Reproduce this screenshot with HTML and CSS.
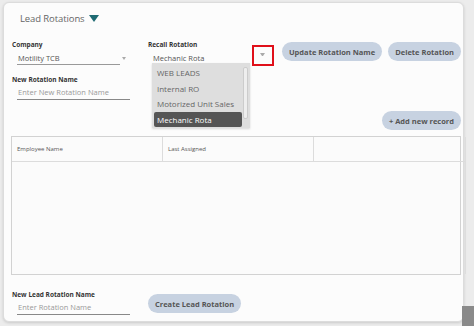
FILE: index.html
```html
<!DOCTYPE html>
<html lang="en">
<head>
    <meta charset="UTF-8">
    <title>Lead Rotations</title>
    <link rel="stylesheet" href="styles.css">
</head>
<body>
    <div class="card">
        <div class="card-header">
            <span class="card-title">Lead Rotations</span>
            <span class="caret"></span>
        </div>

        <div class="top-row">
            <div class="field-col">
                <div class="field">
                    <label>Company</label>
                    <div class="select-line">
                        <span>Motility TCB</span>
                        <span class="mini-arrow"></span>
                    </div>
                </div>
                <div class="field">
                    <label>New Rotation Name</label>
                    <div class="input-line wide">Enter New Rotation Name</div>
                </div>
            </div>

            <div class="recall-col">
                <label>Recall Rotation</label>
                <div class="recall-select">
                    <span>Mechanic Rota</span>
                    <span class="arrow-box"><span class="mini-arrow"></span></span>
                </div>
                <div class="dropdown">
                    <div class="dropdown-list">
                        <div class="dd-item">WEB LEADS</div>
                        <div class="dd-item">Internal RO</div>
                        <div class="dd-item">Motorized Unit Sales</div>
                        <div class="dd-item selected">Mechanic Rota</div>
                    </div>
                    <div class="dd-scroll"></div>
                </div>
            </div>

            <div class="btn-row">
                <button class="pill-btn">Update Rotation Name</button>
                <button class="pill-btn">Delete Rotation</button>
            </div>
        </div>

        <div class="add-row">
            <button class="pill-btn">+ Add new record</button>
        </div>

        <div class="grid-box">
            <div class="grid-main">
                <div class="grid-head">
                    <div class="grid-col">Employee Name</div>
                    <div class="grid-col">Last Assigned</div>
                    <div class="grid-col"></div>
                </div>
                <div class="grid-body"></div>
            </div>
            <div class="grid-scroll"><div class="grid-thumb"></div></div>
        </div>

        <div class="bottom-row">
            <div class="field">
                <label>New Lead Rotation Name</label>
                <div class="input-line wide">Enter Rotation Name</div>
            </div>
            <button class="pill-btn">Create Lead Rotation</button>
        </div>
    </div>

    <div class="page-thumb"></div>
</body>
</html>
```

FILE: styles.css
```css
* {
    margin: 0;
    padding: 0;
    box-sizing: border-box;
}

body {
    font-family: 'Open Sans', 'Liberation Sans', sans-serif;
    background: #ececec;
    width: 474px;
    height: 326px;
    overflow: hidden;
    padding: 2px 10px 0 3px;
    position: relative;
    color: #555;
}

.card {
    background: #fcfcfc;
    border: 1px solid #dcdcdc;
    border-radius: 6px;
    box-shadow: 0 1px 3px rgba(0, 0, 0, 0.15);
    height: 320px;
    padding: 0 2px 0 7px;
}

.card-header {
    display: flex;
    align-items: center;
    height: 30px;
    padding-left: 9px;
}

.card-title {
    font-size: 9.5px;
    letter-spacing: -0.1px;
    color: #666;
}

.caret {
    width: 0;
    height: 0;
    border-left: 5px solid transparent;
    border-right: 5px solid transparent;
    border-top: 7px solid #1f6b73;
    margin-left: 4px;
    margin-top: 1px;
}

label {
    display: block;
    font-size: 6.5px;
    font-weight: bold;
    color: #333;
    margin-left: 1px;
}

.top-row {
    display: flex;
    margin-top: 7px;
    height: 72px;
}

.field-col {
    width: 137px;
}

.field {
    margin-bottom: 10px;
}

.select-line {
    display: flex;
    align-items: center;
    justify-content: space-between;
    width: 109px;
    margin-left: 6px;
    padding: 4px 0 2px 1px;
    font-size: 7.5px;
    color: #555;
    position: relative;
}

.select-line::after {
    content: "";
    position: absolute;
    left: 0;
    right: 6px;
    bottom: 0;
    border-bottom: 1px solid #999;
}

.mini-arrow {
    width: 0;
    height: 0;
    border-left: 2px solid transparent;
    border-right: 2px solid transparent;
    border-top: 3px solid #aaa;
}

.input-line {
    margin-left: 6px;
    padding: 3px 0 2px 1px;
    font-size: 7.5px;
    color: #999;
    border-bottom: 1px solid #888;
    width: 113px;
}

.recall-col {
    width: 135px;
    position: relative;
}

.recall-select {
    display: flex;
    align-items: center;
    justify-content: space-between;
    margin-left: 5px;
    width: 122px;
    height: 21px;
    margin-top: -4px;
    font-size: 7.5px;
    color: #555;
}

.recall-select span:first-child {
    padding-top: 5px;
    padding-left: 1px;
}

.arrow-box {
    width: 22px;
    height: 21px;
    border: 2px solid #e0101a;
    display: flex;
    align-items: center;
    justify-content: center;
    padding-top: 2px;
}

/* open dropdown list over the page */
.dropdown {
    position: absolute;
    left: 5px;
    top: 23px;
    width: 98px;
    height: 65px;
    background: #dedede;
    display: flex;
    padding: 2px;
    box-shadow: 0 1px 2px rgba(0, 0, 0, 0.15);
    z-index: 5;
}

.dropdown-list {
    flex: 1;
}

.dd-item {
    height: 15.5px;
    line-height: 15.5px;
    font-size: 8px;
    color: #666;
    padding-left: 3px;
}

.dd-item.selected {
    background: #555;
    color: #fff;
    border-radius: 2px;
}

.dd-scroll {
    width: 5px;
    height: 52px;
    margin-top: 2px;
    margin-left: 1px;
    border: 1px solid #ccc;
    border-radius: 2px;
    background: #eee;
}

.btn-row {
    display: flex;
    gap: 6px;
    padding-top: 2px;
    margin-left: 1px;
}

.pill-btn {
    font-family: 'Open Sans', 'Liberation Sans', sans-serif;
    font-size: 7.5px;
    font-weight: bold;
    color: #555;
    background: #c7d2e1;
    border: none;
    border-radius: 10px;
    height: 19px;
    padding: 0 7px;
    white-space: nowrap;
}

.add-row {
    display: flex;
    justify-content: flex-end;
    margin-top: -1px;
}

.grid-box {
    display: flex;
    margin-top: 6px;
    height: 139px;
    border: 1px solid #d2d2d2;
    background: #fbfbfb;
}

.grid-main {
    flex: 1;
}

.grid-head {
    display: flex;
    height: 25px;
    border-bottom: 1px solid #dcdcdc;
}

.grid-col {
    width: 151px;
    border-right: 1px solid #dcdcdc;
    font-size: 6px;
    color: #555;
    padding: 8px 0 0 5px;
}

.grid-col:last-child {
    flex: 1;
    border-right: none;
}

.grid-scroll {
    width: 5px;
    background: #eee;
    border-left: 1px solid #ddd;
}

.grid-thumb {
    height: 24px;
    background: #777;
}

.bottom-row {
    display: flex;
    align-items: flex-start;
    margin-top: 15px;
}

.bottom-row .field {
    width: 137px;
}

.bottom-row .pill-btn {
    margin-top: 4px;
}

.page-thumb {
    position: absolute;
    right: 0;
    bottom: 0;
    width: 12px;
    height: 20px;
    background: #8a8a8a;
}
```
